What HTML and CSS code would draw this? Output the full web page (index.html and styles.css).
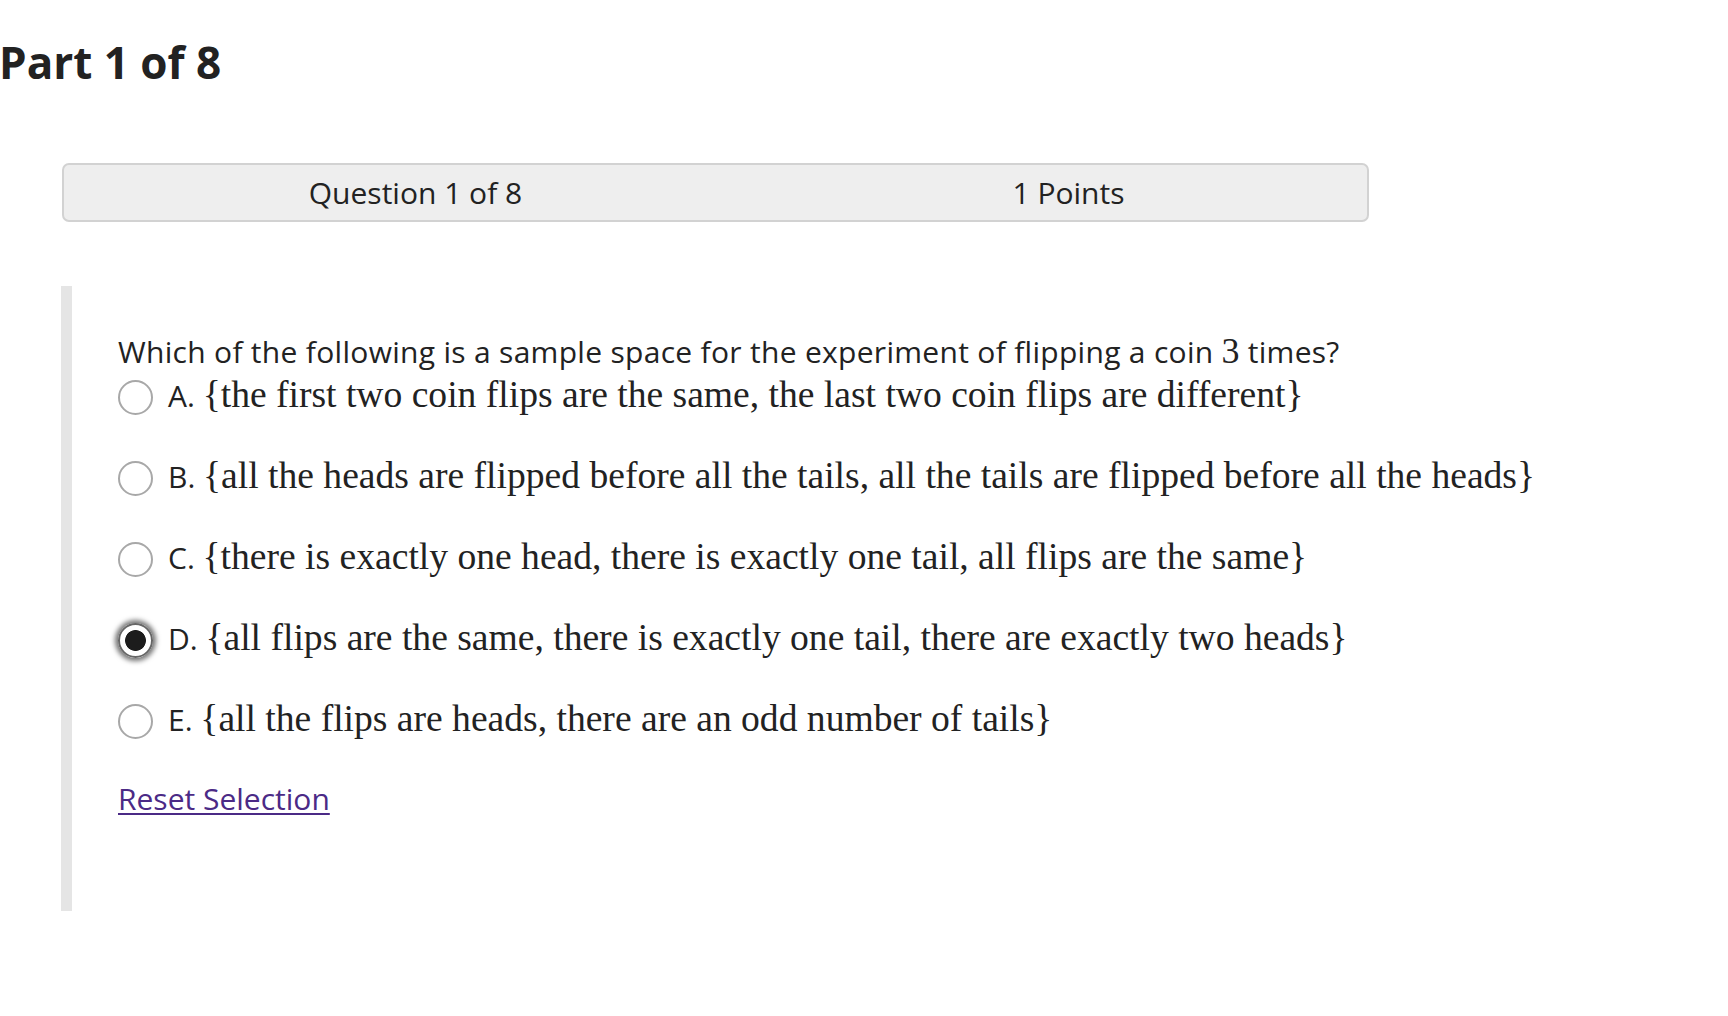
FILE: index.html
```html
<!DOCTYPE html>
<html lang="en">
<head>
<meta charset="utf-8">
<title>Part 1 of 8</title>
<link rel="stylesheet" href="styles.css">
</head>
<body>
<h1 class="part-title">Part 1 of 8</h1>

<div class="qbar">
  <div class="qbar-cell">Question 1 of 8</div>
  <div class="qbar-cell">1 Points</div>
</div>

<section class="question">
  <p class="prompt">Which of the following is a sample space for the experiment of flipping a coin <span class="math">3</span> times?</p>
  <div class="options">
    <label class="option"><input type="radio" name="q1" class="radio"><span class="label">A. <span class="math">{the first two coin flips are the same, the last two coin flips are different}</span></span></label>
    <label class="option"><input type="radio" name="q1" class="radio"><span class="label">B. <span class="math">{all the heads are flipped before all the tails, all the tails are flipped before all the heads}</span></span></label>
    <label class="option"><input type="radio" name="q1" class="radio"><span class="label">C. <span class="math">{there is exactly one head, there is exactly one tail, all flips are the same}</span></span></label>
    <label class="option"><input type="radio" name="q1" class="radio" checked><span class="label">D. <span class="math">{all flips are the same, there is exactly one tail, there are exactly two heads}</span></span></label>
    <label class="option"><input type="radio" name="q1" class="radio"><span class="label">E. <span class="math">{all the flips are heads, there are an odd number of tails}</span></span></label>
  </div>
  <a class="reset" href="#">Reset Selection</a>
</section>
</body>
</html>
```

FILE: styles.css
```css
html, body {
  margin: 0;
  padding: 0;
  background: #ffffff;
}

body {
  font-family: "Open Sans", "Liberation Sans", sans-serif;
  color: #222222;
  width: 1728px;
  min-height: 1016px;
}

.part-title {
  margin: 32px 0 0 -1px;
  font-size: 44px;
  font-weight: 700;
  line-height: 61px;
  color: #222222;
}

.qbar {
  box-sizing: border-box;
  margin: 70px 0 0 62px;
  width: 1307px;
  height: 59px;
  border: 2px solid #d2d2d2;
  border-radius: 7px;
  background: #eeeeee;
  padding-left: 25px;
  display: grid;
  grid-template-columns: 653px 653px;
  align-items: center;
  font-size: 30px;
  line-height: 41px;
  color: #222222;
}

.qbar-cell {
  text-align: center;
  white-space: nowrap;
}

.question {
  box-sizing: border-box;
  margin: 64px 0 0 61px;
  border-left: 11px solid #e5e5e5;
  padding: 45px 0 92px 46px;
  font-size: 30px;
}

.prompt {
  margin: 0;
  line-height: 41px;
  white-space: nowrap;
  letter-spacing: 0.3px;
}

.math {
  font-family: "Liberation Serif", "Times New Roman", serif;
  font-size: 37.6px;
  letter-spacing: 0;
}

.prompt .math {
  font-size: 36px;
}

.options {
  margin-top: 2px;
  display: flex;
  flex-direction: column;
  gap: 39px;
}

.option {
  display: flex;
  align-items: flex-start;
  height: 42px;
  line-height: 41px;
  cursor: pointer;
}

.label {
  white-space: nowrap;
}

.radio {
  -webkit-appearance: none;
  appearance: none;
  box-sizing: border-box;
  flex: 0 0 auto;
  width: 35px;
  height: 35px;
  margin: 6px 15px 0 0;
  border: 2px solid #a8a8a8;
  border-radius: 50%;
  background: #ffffff;
}

.radio:checked {
  border-color: #666666;
  background: radial-gradient(circle, #1c1c1c 0 10px, #ffffff 10.8px);
  box-shadow: 0 0 5px 3px rgba(0, 0, 0, 0.55);
}

.reset {
  display: inline-block;
  margin-top: 38px;
  line-height: 41px;
  color: #4b2a86;
  text-decoration: underline;
  text-underline-offset: 3px;
  text-decoration-thickness: 2px;
}
```
